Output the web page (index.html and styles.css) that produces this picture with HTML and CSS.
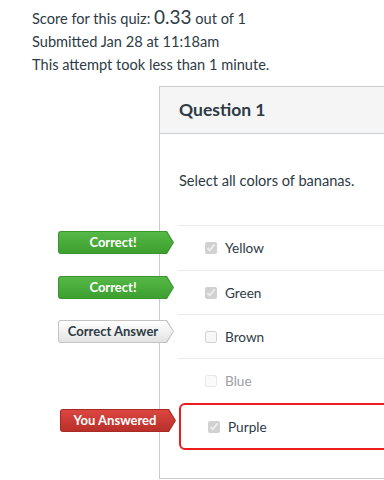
FILE: index.html
```html
<!DOCTYPE html>
<html lang="en">
<head>
    <meta charset="UTF-8">
    <title>Quiz result</title>
    <link rel="stylesheet" href="styles.css">
</head>
<body>
<div class="summary">
    <div>Score for this quiz: <span class="score">0.33</span> out of 1</div>
    <div>Submitted Jan 28 at 11:18am</div>
    <div>This attempt took less than 1 minute.</div>
</div>
<div class="wrap">
    <div class="question">
        <h2 class="q-head">Question 1</h2>
        <p class="q-text">Select all colors of bananas.</p>
        <ul class="answers">
            <li class="answer">
                <span class="flag green"><span>Correct!</span></span>
                <input type="checkbox" checked disabled>
                <label>Yellow</label>
            </li>
            <li class="answer">
                <span class="flag green"><span>Correct!</span></span>
                <input type="checkbox" checked disabled>
                <label>Green</label>
            </li>
            <li class="answer">
                <span class="flag grey"><span>Correct Answer</span></span>
                <input type="checkbox" disabled>
                <label>Brown</label>
            </li>
            <li class="answer faded">
                <input type="checkbox" disabled>
                <label>Blue</label>
            </li>
            <li class="answer wrong">
                <span class="flag red"><span>You Answered</span></span>
                <input type="checkbox" checked disabled>
                <label>Purple</label>
            </li>
        </ul>
    </div>
</div>
</body>
</html>
```

FILE: styles.css
```css
*{
    margin:0;
    padding:0;
    box-sizing:border-box;
}
html,body{
    overflow:hidden;
}
body{
    font-family:Lato,"Liberation Sans",sans-serif;
    color:#2d3b45;
    background:#fff;
}
ul{
    list-style:none;
}
.summary{
    padding:7px 0 0 32px;
    font-size:14.6px;
    line-height:23px;
}
.summary div{
    height:23px;
}
.score{
    font-size:19px;
    line-height:1;
}
.wrap{
    margin-top:10px;
    padding-left:159px;
}
.question{
    width:320px;
    border:1px solid #c7cdd1;
    padding-bottom:28px;
}
.q-head{
    height:47px;
    line-height:46px;
    padding-left:19px;
    font-size:17.5px;
    font-weight:bold;
    background:#f5f5f5;
    border-bottom:1px solid #c7cdd1;
}
.q-text{
    padding:36px 0 33px 19px;
    font-size:14.6px;
    line-height:22px;
}
.answers{
    margin-left:18px;
}
.answer{
    position:relative;
    display:flex;
    align-items:center;
    height:44px;
    padding-left:27px;
    border-top:1px solid #e8eaec;
    font-size:13.6px;
}
.answer:first-child{
    height:45px;
}
.answer input{
    width:12px;
    height:12px;
    margin:0 8px 0 0;
}
.answer.faded{
    color:#9aa0a5;
}
.answer.faded input{
    opacity:.5;
}
.answer.wrong{
    height:47px;
    margin:1px 0 0 1px;
    border:2px solid #ee1c1c;
    border-radius:6px;
}
.flag{
    position:absolute;
    top:5px;
    right:calc(100% + 4px);
    width:116px;
    height:23px;
    padding:1px;
    border-radius:3px 0 0 3px;
    clip-path:polygon(0 0,calc(100% - 7px) 0,100% 50%,calc(100% - 7px) 100%,0 100%);
}
.flag span{
    display:block;
    height:21px;
    line-height:21px;
    border-radius:2px 0 0 2px;
    clip-path:polygon(0 0,calc(100% - 7px) 0,100% 50%,calc(100% - 7px) 100%,0 100%);
    text-align:center;
    padding-right:6px;
    font-size:13px;
    font-weight:bold;
    color:#fff;
}
.flag.green{
    background:#3a9430;
}
.flag.green span{
    background:linear-gradient(#56b846,#3c9f2f);
}
.flag.grey{
    background:#c4c4c4;
}
.flag.grey span{
    background:linear-gradient(#ffffff,#e3e3e3);
    color:#2d3b45;
}
.flag.red{
    background:#a82a24;
    top:4px;
    right:calc(100% + 5px);
}
.flag.red span{
    background:linear-gradient(#dc4640,#b9302a);
}
```
